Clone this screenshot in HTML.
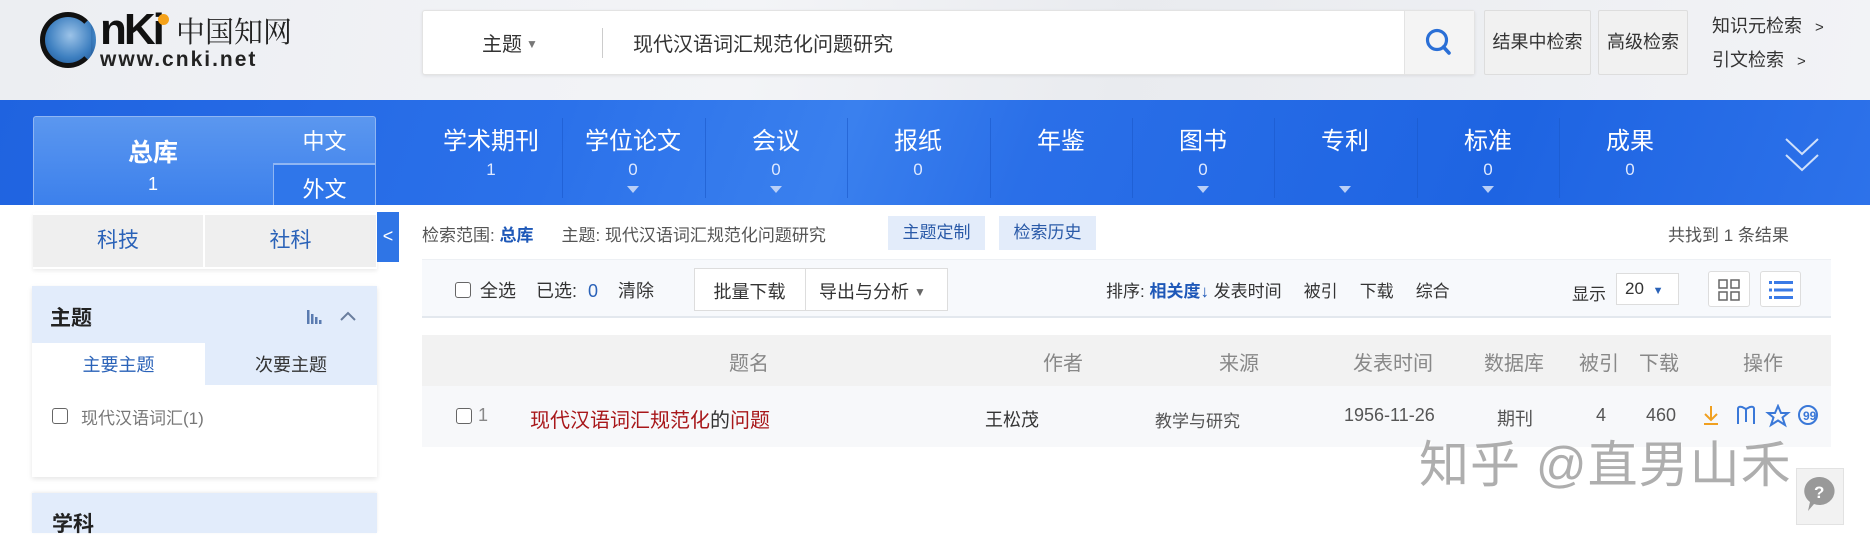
<!DOCTYPE html>
<html><head><meta charset="utf-8"><style>
*{margin:0;padding:0;box-sizing:border-box}
body{width:1870px;height:525px;overflow:hidden;position:relative;background:#fff;font-family:"Liberation Sans","Noto Sans CJK SC",sans-serif;color:#333}
.a{position:absolute;white-space:nowrap}
.hdr{left:0;top:0;width:1870px;height:100px;background:linear-gradient(100deg,#eceef2 0%,#f3f4f7 40%,#e9ebef 60%,#f2f3f6 100%)}
.blue{left:0;top:100px;width:1870px;height:105px;background:linear-gradient(110deg,#1f63e0 0%,#2b71ea 30%,#3a80ee 45%,#2a6fe8 55%,#1e64e2 80%,#2d72ea 100%)}
.cat{color:#fff;text-align:center;width:142px}
.cat .t{font-size:24px;line-height:28px}
.cat .n{font-size:17px;line-height:22px;margin-top:3px;color:#dfe9ff}
.tri{width:0;height:0;border-left:6px solid transparent;border-right:6px solid transparent;border-top:7px solid #b9cff7;margin:5px auto 0}
.sep{width:1px;height:80px;top:118px;background:#1a58c9;opacity:.6}
.btn{background:#f1f1f1;border:1px solid #ddd;font-size:18px;color:#333;text-align:center;border-radius:2px}
.cb{width:16px;height:16px;border:1.5px solid #666;border-radius:3px;background:#fff}
.hd{font-size:20px;color:#888}
.rw{font-size:18px;color:#555}
</style></head><body>
<div class="a hdr"></div>
<!-- logo -->
<div class="a" style="left:40px;top:12px;width:56px;height:56px;border-radius:50%;background:radial-gradient(circle at 55% 40%,#9cc3e8,#3d7fc0 60%,#1c4f8c);border:5px solid #111;border-right-color:transparent"></div>
<div class="a" style="left:100px;top:8px;font:900 44px/44px 'Liberation Sans',sans-serif;color:#111;letter-spacing:-3px">nKi</div>
<div class="a" style="left:158px;top:14px;width:11px;height:11px;border-radius:50%;background:#f5a21a"></div>
<div class="a" style="left:176px;top:14px;font:29px/34px 'Noto Serif CJK SC',serif;color:#222">中国知网</div>
<div class="a" style="left:100px;top:48px;font:bold 21px/23px 'Liberation Sans',sans-serif;color:#222;letter-spacing:2px">www.cnki.net</div>
<!-- search -->
<div class="a" style="left:422px;top:10px;width:1053px;height:65px;background:#fff;border:1px solid #e3e3e3;border-radius:3px;box-shadow:0 1px 3px rgba(0,0,0,.08)"></div>
<div class="a" style="left:482px;top:28px;font-size:20px;color:#333">主题<span style="font-size:12px;color:#777;margin-left:4px;vertical-align:3px">▼</span></div>
<div class="a" style="left:602px;top:28px;width:1px;height:30px;background:#ccc"></div>
<div class="a" style="left:633px;top:28px;font-size:20px;color:#333">现代汉语词汇规范化问题研究</div>
<div class="a" style="left:1404px;top:11px;width:70px;height:63px;background:#f4f4f4;border-left:1px solid #e3e3e3"></div>
<svg class="a" style="left:1423px;top:26px" width="32" height="32" viewBox="0 0 32 32"><circle cx="14" cy="14" r="9.5" fill="none" stroke="#2a6fd6" stroke-width="3.2"/><path d="M20.5 21 L26 27" stroke="#2a6fd6" stroke-width="3.6" stroke-linecap="round"/></svg>
<div class="a btn" style="left:1484px;top:10px;width:107px;height:65px;line-height:63px">结果中检索</div>
<div class="a btn" style="left:1598px;top:10px;width:90px;height:65px;line-height:63px">高级检索</div>
<div class="a" style="left:1712px;top:12px;font-size:18px;color:#333">知识元检索 <span style="margin-left:8px;font-size:15px">&gt;</span></div>
<div class="a" style="left:1712px;top:46px;font-size:18px;color:#333">引文检索 <span style="margin-left:8px;font-size:15px">&gt;</span></div>
<!-- blue band -->
<div class="a blue"></div>
<div class="a" style="left:33px;top:116px;width:343px;height:89px;background:linear-gradient(180deg,#5b97ef,#3c80ec);border:1px solid #8fb6f3;border-bottom:none;border-radius:3px 3px 0 0"></div>
<div class="a" style="left:273px;top:164px;width:103px;height:41px;background:#2f76ea;border:1px solid #8fb6f3;border-bottom:none"></div>
<div class="a" style="left:273px;top:116px;width:103px;height:48px;border-bottom:1px solid #8fb6f3"></div>
<div class="a" style="left:93px;top:133px;width:120px;text-align:center;color:#fff;font-size:25px;font-weight:bold">总库</div>
<div class="a" style="left:93px;top:174px;width:120px;text-align:center;color:#fff;font-size:18px">1</div>
<div class="a" style="left:273px;top:124px;width:103px;text-align:center;color:#fff;font-size:22px">中文</div>
<div class="a" style="left:273px;top:172px;width:103px;text-align:center;color:#fff;font-size:22px">外文</div>
<div class="a cat" style="left:420px;top:128px"><div class="t">学术期刊</div><div class="n">1</div></div>
<div class="a sep" style="left:562px"></div>
<div class="a cat" style="left:562px;top:128px"><div class="t">学位论文</div><div class="n">0</div><div class="tri"></div></div>
<div class="a sep" style="left:705px"></div>
<div class="a cat" style="left:705px;top:128px"><div class="t">会议</div><div class="n">0</div><div class="tri"></div></div>
<div class="a sep" style="left:847px"></div>
<div class="a cat" style="left:847px;top:128px"><div class="t">报纸</div><div class="n">0</div></div>
<div class="a sep" style="left:990px"></div>
<div class="a cat" style="left:990px;top:128px"><div class="t">年鉴</div></div>
<div class="a sep" style="left:1132px"></div>
<div class="a cat" style="left:1132px;top:128px"><div class="t">图书</div><div class="n">0</div><div class="tri"></div></div>
<div class="a sep" style="left:1274px"></div>
<div class="a cat" style="left:1274px;top:128px"><div class="t">专利</div><div class="n" style="visibility:hidden">0</div><div class="tri"></div></div>
<div class="a sep" style="left:1417px"></div>
<div class="a cat" style="left:1417px;top:128px"><div class="t">标准</div><div class="n">0</div><div class="tri"></div></div>
<div class="a sep" style="left:1559px"></div>
<div class="a cat" style="left:1559px;top:128px"><div class="t">成果</div><div class="n">0</div></div>
<svg class="a" style="left:1784px;top:136px" width="36" height="38" viewBox="0 0 36 38"><path d="M2 3 L18 18 L34 3 M2 19 L18 34 L34 19" fill="none" stroke="#cfe0fb" stroke-width="2"/></svg>
<!-- sidebar -->
<div class="a" style="left:33px;top:213px;width:344px;height:56px;background:#fff;box-shadow:0 2px 4px rgba(0,0,0,.08)"></div>
<div class="a" style="left:33px;top:215px;width:170px;height:52px;background:#efefef;text-align:center;line-height:52px;font-size:21px;color:#2a62b8">科技</div>
<div class="a" style="left:205px;top:215px;width:171px;height:52px;background:#efefef;text-align:center;line-height:52px;font-size:21px;color:#2a62b8">社科</div>
<div class="a" style="left:377px;top:212px;width:22px;height:50px;background:#2f75e6;color:#fff;text-align:center;line-height:48px;font-size:18px">&lt;</div>
<div class="a" style="left:32px;top:286px;width:345px;height:191px;background:#fff;box-shadow:0 2px 5px rgba(0,0,0,.1)"></div>
<div class="a" style="left:32px;top:286px;width:345px;height:57px;background:#e2ecfb"></div>
<div class="a" style="left:50px;top:302px;font-size:21px;font-weight:bold;color:#222">主题</div>
<svg class="a" style="left:306px;top:309px" width="20" height="16"><rect x="1" y="1" width="2.5" height="14" fill="#5a7bb0"/><rect x="5" y="5" width="2.5" height="10" fill="#5a7bb0"/><rect x="9" y="8" width="2.5" height="7" fill="#5a7bb0"/><rect x="13" y="11" width="2.5" height="4" fill="#5a7bb0"/></svg>
<svg class="a" style="left:339px;top:310px" width="18" height="12"><path d="M2 10 L9 3 L16 10" fill="none" stroke="#6a7e9e" stroke-width="2"/></svg>
<div class="a" style="left:205px;top:343px;width:172px;height:42px;background:#e2ecfb"></div>
<div class="a" style="left:32px;top:351px;width:173px;text-align:center;font-size:18px;color:#2a62b8">主要主题</div>
<div class="a" style="left:205px;top:351px;width:172px;text-align:center;font-size:18px;color:#333">次要主题</div>
<div class="a cb" style="left:52px;top:408px"></div>
<div class="a" style="left:81px;top:404px;font-size:17px;color:#777">现代汉语词汇(1)</div>
<div class="a" style="left:32px;top:493px;width:345px;height:40px;background:#e2ecfb;box-shadow:0 -1px 3px rgba(0,0,0,.08)"></div>
<div class="a" style="left:52px;top:508px;font-size:21px;font-weight:bold;color:#222">学科</div>
<!-- main -->
<div class="a" style="left:422px;top:221px;font-size:17px;color:#555">检索范围: <b style="color:#1e58b8">总库</b><span style="margin-left:28px">主题: 现代汉语词汇规范化问题研究</span></div>
<div class="a" style="left:888px;top:216px;width:97px;height:34px;background:#e3ecfa;text-align:center;line-height:34px;font-size:17px;color:#2a5aa8">主题定制</div>
<div class="a" style="left:999px;top:216px;width:97px;height:34px;background:#e3ecfa;text-align:center;line-height:34px;font-size:17px;color:#2a5aa8">检索历史</div>
<div class="a" style="left:1668px;top:221px;font-size:17px;color:#555">共找到 1 条结果</div>
<div class="a" style="left:422px;top:259px;width:1409px;height:59px;background:#f7f9fc;border-top:1px solid #edf0f4;border-bottom:2px solid #e3e8ee"></div>
<div class="a cb" style="left:455px;top:282px"></div>
<div class="a" style="left:480px;top:277px;font-size:18px;color:#333">全选<span style="margin-left:20px">已选: </span><span style="color:#2a62b8;margin-left:6px">0</span><span style="margin-left:20px">清除</span></div>
<div class="a" style="left:694px;top:268px;width:254px;height:43px;background:#fff;border:1px solid #ddd"></div>
<div class="a" style="left:805px;top:268px;width:1px;height:43px;background:#ddd"></div>
<div class="a" style="left:694px;top:278px;width:111px;text-align:center;font-size:18px">批量下载</div>
<div class="a" style="left:819px;top:278px;font-size:18px">导出与分析 <span style="font-size:12px;color:#666;vertical-align:2px">▼</span></div>
<div class="a" style="left:1106px;top:277px;font-size:17px;color:#333">排序: <b style="color:#1e58b8">相关度</b><span style="color:#1e58b8">↓</span> 发表时间<span style="margin-left:22px">被引</span><span style="margin-left:22px">下载</span><span style="margin-left:22px">综合</span></div>
<div class="a" style="left:1572px;top:280px;font-size:17px;color:#333">显示</div>
<div class="a" style="left:1616px;top:273px;width:63px;height:32px;background:#fff;border:1px solid #ddd;font-size:17px;line-height:30px;padding-left:8px">20 <span style="font-size:11px;color:#2a62b8;margin-left:4px">▼</span></div>
<div class="a" style="left:1708px;top:271px;width:42px;height:36px;background:#fff;border:1px solid #ddd;border-radius:3px"></div>
<svg class="a" style="left:1718px;top:279px" width="22" height="22"><rect x="1" y="1" width="8" height="8" fill="none" stroke="#666" stroke-width="1.5"/><rect x="13" y="1" width="8" height="8" fill="none" stroke="#666" stroke-width="1.5"/><rect x="1" y="13" width="8" height="8" fill="none" stroke="#666" stroke-width="1.5"/><rect x="13" y="13" width="8" height="8" fill="none" stroke="#666" stroke-width="1.5"/></svg>
<div class="a" style="left:1760px;top:271px;width:41px;height:36px;background:#fff;border:1px solid #ddd;border-radius:3px"></div>
<svg class="a" style="left:1769px;top:279px" width="24" height="22"><g fill="#3a7ae6"><rect x="0" y="2" width="3" height="3"/><rect x="5" y="2" width="19" height="3"/><rect x="0" y="9.5" width="3" height="3"/><rect x="5" y="9.5" width="19" height="3"/><rect x="0" y="17" width="3" height="3"/><rect x="5" y="17" width="19" height="3"/></g></svg>
<div class="a" style="left:422px;top:335px;width:1409px;height:51px;background:#f2f2f2"></div>
<div class="a" style="left:422px;top:386px;width:1409px;height:61px;background:#f7f8fa"></div>
<div class="a hd" style="left:729px;top:347px">题名</div>
<div class="a hd" style="left:1043px;top:347px">作者</div>
<div class="a hd" style="left:1219px;top:347px">来源</div>
<div class="a hd" style="left:1353px;top:347px">发表时间</div>
<div class="a hd" style="left:1484px;top:347px">数据库</div>
<div class="a hd" style="left:1579px;top:347px">被引</div>
<div class="a hd" style="left:1639px;top:347px">下载</div>
<div class="a hd" style="left:1743px;top:347px">操作</div>
<div class="a cb" style="left:456px;top:408px"></div>
<div class="a" style="left:478px;top:405px;font-size:18px;color:#888">1</div>
<div class="a" style="left:530px;top:404px;font-size:20px;color:#a8171a">现代汉语词汇规范化<span style="color:#333">的</span>问题</div>
<div class="a" style="left:985px;top:406px;font-size:18px;color:#333">王松茂</div>
<div class="a rw" style="left:1155px;top:407px;font-size:17px">教学与研究</div>
<div class="a rw" style="left:1344px;top:405px">1956-11-26</div>
<div class="a rw" style="left:1497px;top:405px">期刊</div>
<div class="a rw" style="left:1596px;top:405px">4</div>
<div class="a rw" style="left:1646px;top:405px">460</div>
<svg class="a" style="left:1702px;top:404px" width="120" height="24"><path d="M9 2 V16 M3 10 L9 16 L15 10 M2 20 H16" fill="none" stroke="#f0a020" stroke-width="2"/><path d="M36 20 V5 Q36 2 40 3 L44 5 L48 3 Q52 2 52 5 V20 M44 5 V18" fill="none" stroke="#3a78d8" stroke-width="2"/><path d="M76 2 L79 9 L86 9 L80.5 13.5 L83 21 L76 16.5 L69 21 L71.5 13.5 L66 9 L73 9 Z" fill="none" stroke="#3a78d8" stroke-width="2"/><circle cx="106" cy="11" r="9" fill="none" stroke="#3a78d8" stroke-width="2"/><text x="101" y="16" font-size="12" font-weight="bold" fill="#3a78d8">99</text></svg>
<div class="a" style="left:1419px;top:425px;font-size:50px;color:rgba(160,160,160,.85);letter-spacing:1px;text-shadow:1px 1px 0 #fff">知乎 @直男山禾</div>
<div class="a" style="left:1796px;top:468px;width:48px;height:57px;background:#f2f2f2;border:1px solid #e2e2e2"></div>
<svg class="a" style="left:1800px;top:474px" width="40" height="40"><path d="M20 3 A15 14 0 1 1 14 30 L8 37 L10 28 A15 14 0 0 1 20 3Z" fill="#999"/><text x="14" y="24" font-size="17" font-weight="bold" fill="#fff">?</text></svg>
</body></html>
